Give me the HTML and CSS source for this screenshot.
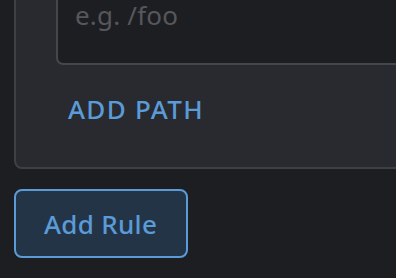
FILE: index.html
```html
<!DOCTYPE html>
<html>
<head>
<meta charset="utf-8">
<link rel="stylesheet" href="styles.css">
</head>
<body>
<div class="page">
  <div class="panel">
    <div class="field"><span class="placeholder">e.g. /foo</span></div>
    <button class="link-btn">ADD PATH</button>
  </div>
  <button class="add-btn">Add Rule</button>
</div>
</body>
</html>
```
FILE: styles.css
```css
html, body {
  margin: 0;
  padding: 0;
  background: #1d1e22;
  overflow: hidden;
  font-family: "Noto Sans", "Open Sans", sans-serif;
}
.page {
  margin-top: -40px;
  padding-left: 14px;
  display: flex;
  flex-direction: column;
  align-items: flex-start;
}
.panel {
  box-sizing: border-box;
  width: 520px;
  background: #292a2f;
  border: 2px solid #3f4045;
  border-top: 0;
  border-radius: 0 0 0 8px;
  padding: 0 0 40px 40px;
  display: flex;
  flex-direction: column;
  align-items: flex-start;
}
.field {
  box-sizing: border-box;
  width: 100%;
  height: 105px;
  background: #1d1e22;
  border: 2px solid #46474c;
  border-top: 0;
  border-radius: 0 0 0 7px;
  padding: 37px 0 0 17px;
}
.placeholder {
  display: block;
  font-size: 26px;
  line-height: 36px;
  letter-spacing: 0.2px;
  color: #56575c;
}
.link-btn {
  margin: 26px 0 0 12px;
  padding: 0;
  border: 0;
  background: none;
  font-family: inherit;
  font-size: 26px;
  line-height: 36px;
  font-weight: 500;
  letter-spacing: 1.3px;
  color: #5a9bd8;
}
.add-btn {
  margin-top: 20px;
  box-sizing: border-box;
  height: 69px;
  padding: 0 29px 0 28px;
  border: 2px solid #5a9bd8;
  border-radius: 8px;
  background: #243447;
  font-family: inherit;
  font-size: 26px;
  line-height: 36px;
  font-weight: 500;
  letter-spacing: 0.3px;
  color: #5a9bd8;
}
```
